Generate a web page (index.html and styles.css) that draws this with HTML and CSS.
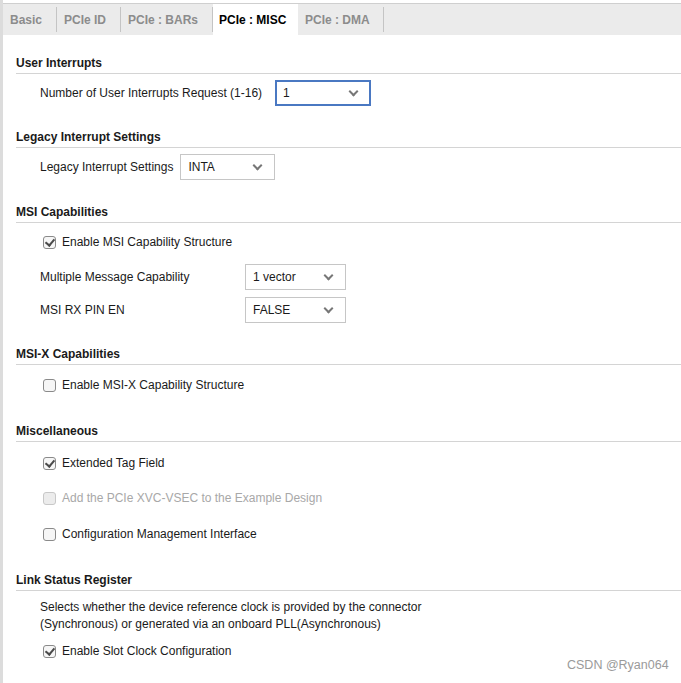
FILE: index.html
```html
<html>

<head>
	<link rel="stylesheet" href="styles.css">
</head>

<body>
	<div id="page">
		<div class="tabs">
			<span class="tab" style="width: 54px">Basic</span>
			<span class="tab" style="width: 64px">PCIe ID</span>
			<span class="tab" style="width: 92px">PCIe : BARs</span>
			<span class="tab active" style="width: 85px">PCIe : MISC</span>
			<span class="tab" style="width: 86px">PCIe : DMA</span>
		</div>

		<div class="section first">
			<div class="title">User Interrupts</div>
			<div class="row field m6">
				<span class="label long">Number of User Interrupts Request (1-16)</span>
				<div class="select focus" style="width: 96px"><span>1</span><i></i></div>
			</div>
		</div>

		<div class="section">
			<div class="title">Legacy Interrupt Settings</div>
			<div class="row field m6">
				<span class="label">Legacy Interrupt Settings</span>
				<div class="select" style="width: 95px"><span>INTA</span><i></i></div>
			</div>
		</div>

		<div class="section msi">
			<div class="title">MSI Capabilities</div>
			<div class="row check m8">
				<span class="box on"></span>
				<span>Enable MSI Capability Structure</span>
			</div>
			<div class="row field m11">
				<span class="label fixed">Multiple Message Capability</span>
				<div class="select" style="width: 101px"><span>1 vector</span><i></i></div>
			</div>
			<div class="row field m7">
				<span class="label fixed">MSI RX PIN EN</span>
				<div class="select" style="width: 101px"><span>FALSE</span><i></i></div>
			</div>
		</div>

		<div class="section">
			<div class="title">MSI-X Capabilities</div>
			<div class="row check m9">
				<span class="box"></span>
				<span>Enable MSI-X Capability Structure</span>
			</div>
		</div>

		<div class="section wide">
			<div class="title">Miscellaneous</div>
			<div class="row check m10">
				<span class="box on"></span>
				<span>Extended Tag Field</span>
			</div>
			<div class="row check disabled m13">
				<span class="box"></span>
				<span>Add the PCIe XVC-VSEC to the Example Design</span>
			</div>
			<div class="row check m14">
				<span class="box"></span>
				<span>Configuration Management Interface</span>
			</div>
		</div>

		<div class="section wide">
			<div class="title">Link Status Register</div>
			<p class="note">Selects whether the device reference clock is provided by the connector<br>(Synchronous) or generated via an onboard PLL(Asynchronous)</p>
			<div class="row check m7">
				<span class="box on"></span>
				<span>Enable Slot Clock Configuration</span>
			</div>
		</div>

		<div class="mark">CSDN @Ryan064</div>
	</div>
</body>
</html>
```

FILE: styles.css
```css
* {
	margin: 0;
	padding: 0;
	box-sizing: border-box;
}

body {
	font-family: "Liberation Sans", Arial, sans-serif;
	font-size: 12px;
	color: #1a1a1a;
	background: white;
}

#page {
	position: relative;
	height: 683px;
	padding-top: 3px;
	border-left: 3px solid #dcdcdc;
	overflow: hidden;
}

.tabs {
	display: flex;
	height: 32px;
	background: #ebebeb;
	border-top: 1px solid #cfcfcf;
	margin-left: -3px;
	padding-left: 3px;
}

.tab {
	display: flex;
	align-items: center;
	padding-left: 7px;
	font-weight: bold;
	color: #8c8c8c;
	position: relative;
}

.tab::after {
	content: "";
	position: absolute;
	right: 0;
	top: 3px;
	bottom: 3px;
	width: 1px;
	background: #c4c4c4;
}

.tab.active {
	background: white;
	color: black;
	padding-left: 6px;
}

.tab.active::after {
	display: none;
}

.section {
	margin-top: 23px;
}

.section.first {
	margin-top: 20px;
}

.section.msi {
	margin-top: 24px;
}

.section.wide {
	margin-top: 27px;
}

.title {
	margin-left: 13px;
	height: 19px;
	line-height: 16px;
	font-weight: bold;
	border-bottom: 1px solid #d4d4d4;
}

.row {
	display: flex;
	align-items: center;
	padding-left: 37px;
}

.row.field {
	height: 26px;
}

.row.check {
	height: 22px;
	padding-left: 40px;
}

.m6 { margin-top: 6px; }
.m7 { margin-top: 7px; }
.m8 { margin-top: 8px; }
.m9 { margin-top: 9px; }
.m10 { margin-top: 10px; }
.m11 { margin-top: 11px; }
.m13 { margin-top: 13px; }
.m14 { margin-top: 14px; }

.label {
	margin-right: 7px;
}

.label.long {
	margin-right: 13px;
}

.label.fixed {
	width: 205px;
	margin-right: 0;
}

.select {
	height: 26px;
	border: 1px solid #c6c6c6;
	display: flex;
	align-items: center;
	justify-content: space-between;
	padding: 0 13px 0 7px;
	background: white;
}

.select.focus {
	border: 2px solid #4a78c2;
	padding-left: 6px;
	padding-right: 12px;
}

.select i {
	width: 7px;
	height: 7px;
	border-right: 2px solid #777;
	border-bottom: 2px solid #777;
	transform: rotate(45deg);
	margin-top: -4px;
}

.box {
	width: 13px;
	height: 13px;
	border: 1px solid #8a8a8a;
	border-radius: 3px;
	background: #f6f6f6;
	margin-right: 6px;
	position: relative;
}

.box.on::after {
	content: "";
	position: absolute;
	left: 3px;
	top: 0px;
	width: 4px;
	height: 7px;
	border-right: 2px solid #4a4a4a;
	border-bottom: 2px solid #4a4a4a;
	transform: rotate(40deg);
}

.disabled {
	color: #a8a8a8;
}

.disabled .box {
	border-color: #c8c8c8;
	background: #ececec;
}

.note {
	margin-top: 8px;
	padding-left: 37px;
	line-height: 17px;
}

.mark {
	position: absolute;
	left: 564px;
	top: 658px;
	font-size: 12.5px;
	color: #9a9a9a;
}
```
